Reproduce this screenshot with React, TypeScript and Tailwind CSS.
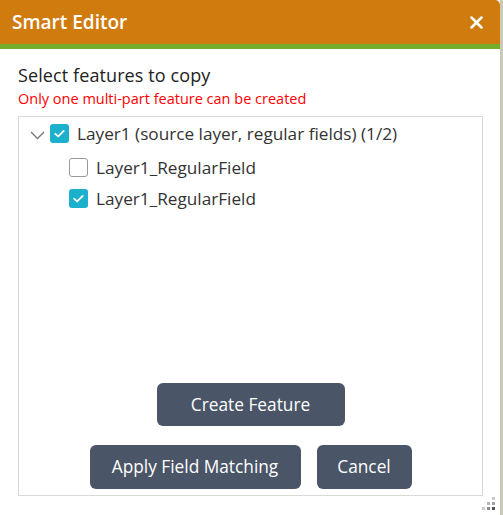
import React from 'react';

const Check = () => (
  <svg viewBox="0 0 20 20" className="w-[13px] h-[13px]" fill="none" stroke="white" strokeWidth="2.8" strokeLinecap="round" strokeLinejoin="round">
    <path d="M3.5 10.5l4.5 4 8.5-8.5" />
  </svg>
);

const Box = ({ checked }: { checked: boolean }) =>
  checked ? (
    <span className="w-[19px] h-[19px] rounded-[3px] bg-[#1bb1cd] flex items-center justify-center shrink-0">
      <Check />
    </span>
  ) : (
    <span className="w-[19px] h-[19px] rounded-[3px] border border-[#9a9a9a] bg-white shrink-0" />
  );

const Grip = () => (
  <svg width="14" height="14" viewBox="0 0 14 14" className="absolute right-[4px] bottom-[4px]">
    <rect x="10" y="0" width="3" height="3" fill="#c9c9c9" />
    <rect x="5" y="5" width="3" height="3" fill="#b5b5b5" />
    <rect x="10" y="5" width="3" height="3" fill="#a0a0a0" />
    <rect x="0" y="10" width="3" height="3" fill="#c9c9c9" />
    <rect x="5" y="10" width="3" height="3" fill="#8a8a8a" />
    <rect x="10" y="10" width="3" height="3" fill="#555" />
  </svg>
);

export default function App() {
  return (
    <div className="w-[503px] h-[515px] flex bg-white overflow-hidden" style={{ fontFamily: '"Open Sans", "Noto Sans", sans-serif' }}>
      <div className="relative w-[500px] h-full bg-white flex flex-col rounded-tr-[5px] overflow-hidden">
        <div className="h-[49px] bg-[#d07b0e] border-b-[5px] border-[#73ad29] flex items-center justify-between pl-[12px] pr-[17px] shrink-0">
          <span className="text-white text-[19px] font-semibold">Smart Editor</span>
          <svg width="13" height="13" viewBox="0 0 13 13" stroke="white" strokeWidth="2.5" strokeLinecap="round">
            <path d="M1.5 1.5l10 10M11.5 1.5l-10 10" />
          </svg>
        </div>
        <div className="pl-[18px] pt-[14px] pr-[17px] flex flex-col flex-1">
          <div className="text-[#222] text-[18px] leading-[24px] tracking-[0.1px]">Select features to copy</div>
          <div className="text-[#ff0000] text-[14.5px] leading-[20px] mt-[2px]">Only one multi-part feature can be created</div>
          <div className="mt-[7px] h-[380px] border border-[#d9d9d9] flex flex-col">
            <div className="flex items-center h-[31px] mt-[1px] pl-[11px]">
              <svg width="15" height="9" viewBox="0 0 15 9" fill="none" stroke="#777" strokeWidth="1.3" className="mt-[3px]">
                <path d="M1 1l6.5 6.5L14 1" />
              </svg>
              <span className="ml-[5px]"><Box checked /></span>
              <span className="text-[#333] text-[17.2px] ml-[8px] whitespace-nowrap">Layer1 (source layer, regular fields) (1/2)</span>
            </div>
            <div className="flex flex-col pl-[50px] mt-[3px]">
              <div className="flex items-center gap-[8px] h-[31px]">
                <Box checked={false} />
                <span className="text-[#333] text-[17.2px]">Layer1_RegularField</span>
              </div>
              <div className="flex items-center gap-[8px] h-[31px]">
                <Box checked />
                <span className="text-[#333] text-[17.2px]">Layer1_RegularField</span>
              </div>
            </div>
            <div className="mt-auto flex flex-col items-center gap-[19px] pb-[6px]">
              <button className="w-[188px] h-[43px] rounded-[6px] bg-[#4a5567] text-white text-[17.3px]">Create Feature</button>
              <div className="flex gap-[16px]">
                <button className="w-[211px] h-[44px] rounded-[6px] bg-[#4a5567] text-white text-[17.3px]">Apply Field Matching</button>
                <button className="w-[95px] h-[44px] rounded-[6px] bg-[#4a5567] text-white text-[17.3px]">Cancel</button>
              </div>
            </div>
          </div>
        </div>
        <Grip />
      </div>
      <div className="w-[3px] h-full bg-[#c9cbb8]" />
    </div>
  );
}
